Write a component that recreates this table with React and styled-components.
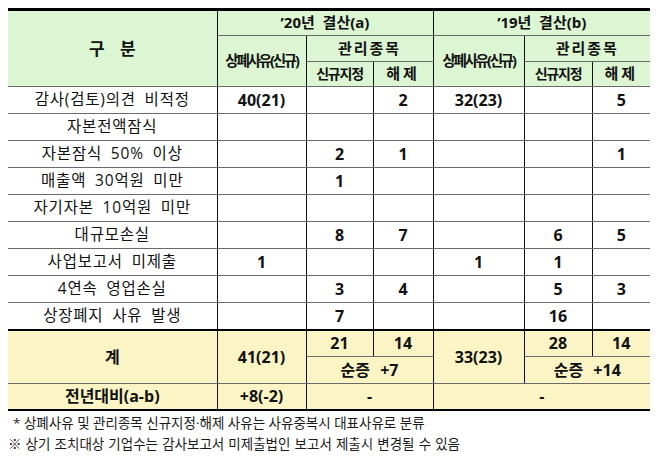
import React from "react";
import styled, { createGlobalStyle } from "styled-components";

const GlobalStyle = createGlobalStyle`
  html, body {
    margin: 0;
    padding: 0;
    background: #ffffff;
  }
  body {
    font-family: "Open Sans", "Noto Sans CJK KR", sans-serif;
    color: #111;
  }
`;

const Page = styled.div`
  width: 658px;
  height: 461px;
  padding: 8px 8px 0 8px;
  box-sizing: border-box;
  overflow: hidden;
`;

const Table = styled.table`
  width: 642px;
  border-collapse: collapse;
  table-layout: fixed;
  border-top: 3px solid #000;
  border-bottom: 2px solid #000;
  border-left: hidden;
  border-right: hidden;
`;

const Row = styled.tr`
  height: ${(p) => p.$h || 27}px;
`;

const Cell = styled.td`
  padding: 0;
  text-align: center;
  vertical-align: middle;
  border-left: 1px solid #111;
  border-right: 1px solid #111;
  border-top: ${(p) => (p.$strong ? "2px solid #000" : "1px solid #6a6a6a")};
  border-bottom: 1px solid #6a6a6a;
  line-height: 1.15;
  white-space: nowrap;
`;

const HeadCell = styled(Cell)`
  background: #dcf5d3;
  font-weight: 700;
  font-size: ${(p) => p.$size || 15}px;
  letter-spacing: ${(p) => p.$ls || 0}px;
  word-spacing: ${(p) => p.$ws || 0}px;
`;

const Label = styled(Cell)`
  font-size: 15.5px;
  letter-spacing: 0.8px;
  word-spacing: 4px;
  font-weight: 400;
  white-space: pre;
`;

const Num = styled(Cell)`
  font-size: 16px;
  font-weight: 700;
`;

const TotalCell = styled(Cell)`
  background: #fbf4c5;
  font-weight: 700;
  font-size: ${(p) => p.$size || 16}px;
  word-spacing: ${(p) => p.$ws || 0}px;
`;

const Notes = styled.div`
  margin-top: 2px;
  font-size: 13.5px;
  line-height: 21px;
  color: #1a1a1a;
`;

const Note = styled.div`
  padding-left: ${(p) => p.$indent || 0}px;
  white-space: nowrap;
  word-spacing: ${(p) => p.$ws || 0}px;
`;

const rows = [
  ["감사(검토)의견 비적정", "40(21)", "", "2", "32(23)", "", "5"],
  ["자본전액잠식", "", "", "", "", "", ""],
  ["자본잠식 50% 이상", "", "2", "1", "", "", "1"],
  ["매출액 30억원 미만", "", "1", "", "", "", ""],
  ["자기자본 10억원 미만", "", "", "", "", "", ""],
  ["대규모손실", "", "8", "7", "", "6", "5"],
  ["사업보고서 미제출", "1", "", "", "1", "1", ""],
  ["4연속 영업손실", "", "3", "4", "", "5", "3"],
  ["상장폐지 사유 발생", "", "7", "", "", "16", ""],
];

export default function App() {
  return (
    <>
      <GlobalStyle />
      <Page>
        <Table>
          <colgroup>
            <col style={{ width: 209 }} />
            <col style={{ width: 89 }} />
            <col style={{ width: 67 }} />
            <col style={{ width: 60 }} />
            <col style={{ width: 91 }} />
            <col style={{ width: 68 }} />
            <col style={{ width: 58 }} />
          </colgroup>
          <thead>
            <Row $h={26}>
              <HeadCell rowSpan={3} $size={17} $ws={11}>
                구 분
              </HeadCell>
              <HeadCell colSpan={3}>’20년&nbsp;&nbsp;결산(a)</HeadCell>
              <HeadCell colSpan={3}>’19년&nbsp;&nbsp;결산(b)</HeadCell>
            </Row>
            <Row $h={26}>
              <HeadCell rowSpan={2} $size={14.5} $ls={-2.2}>
                상폐사유(신규)
              </HeadCell>
              <HeadCell colSpan={2} $ls={2}>
                관리종목
              </HeadCell>
              <HeadCell rowSpan={2} $size={14.5} $ls={-2.2}>
                상폐사유(신규)
              </HeadCell>
              <HeadCell colSpan={2} $ls={2}>
                관리종목
              </HeadCell>
            </Row>
            <Row $h={25}>
              <HeadCell $size={14} $ls={-1.2}>
                신규지정
              </HeadCell>
              <HeadCell $ls={3}>해제</HeadCell>
              <HeadCell $size={14} $ls={-1.2}>
                신규지정
              </HeadCell>
              <HeadCell $ls={3}>해제</HeadCell>
            </Row>
          </thead>
          <tbody>
            {rows.map((r, i) => (
              <Row key={i} $h={27}>
                <Label>{r[0]}</Label>
                {r.slice(1).map((v, j) => (
                  <Num key={j}>{v}</Num>
                ))}
              </Row>
            ))}
            <Row $h={27}>
              <TotalCell rowSpan={2} $strong>
                계
              </TotalCell>
              <TotalCell rowSpan={2} $strong>
                41(21)
              </TotalCell>
              <TotalCell $strong>21</TotalCell>
              <TotalCell $strong>14</TotalCell>
              <TotalCell rowSpan={2} $strong>
                33(23)
              </TotalCell>
              <TotalCell $strong>28</TotalCell>
              <TotalCell $strong>14</TotalCell>
            </Row>
            <Row $h={27}>
              <TotalCell colSpan={2} $ws={6}>
                순증 +7
              </TotalCell>
              <TotalCell colSpan={2} $ws={6}>
                순증 +14
              </TotalCell>
            </Row>
            <Row $h={26}>
              <TotalCell>전년대비(a-b)</TotalCell>
              <TotalCell>+8(-2)</TotalCell>
              <TotalCell colSpan={2}>-</TotalCell>
              <TotalCell colSpan={3}>-</TotalCell>
            </Row>
          </tbody>
        </Table>
        <Notes>
          <Note $indent={5}>
            * 상폐사유 및 관리종목 신규지정·해제 사유는 사유중복시 대표사유로 분류
          </Note>
          <Note $ws={0.6}>
            ※ 상기 조치대상 기업수는 감사보고서 미제출법인 보고서 제출시 변경될 수 있음
          </Note>
        </Notes>
      </Page>
    </>
  );
}
